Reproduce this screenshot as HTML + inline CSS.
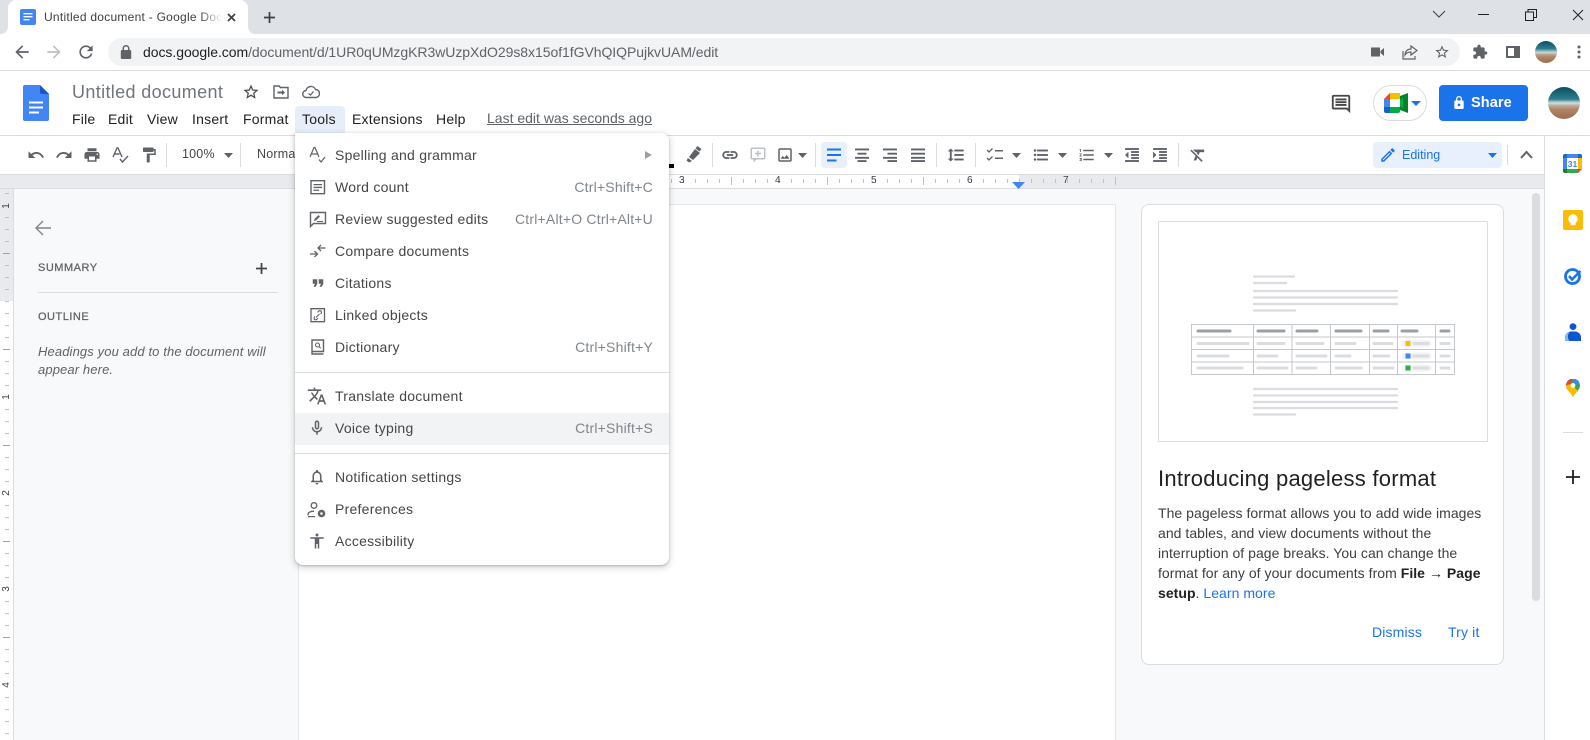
<!DOCTYPE html>
<html><head><meta charset="utf-8"><style>
html,body{margin:0;padding:0;width:1590px;height:740px;overflow:hidden;background:#f8f9fa;font-family:"Liberation Sans",Arial,sans-serif;color:#3c4043}
div,svg,span.a{position:absolute}
.t{white-space:nowrap;line-height:20px;height:20px}
svg.i{width:18px;height:18px;fill:#5f6368}
.b{stroke:#5f6368;stroke-width:.5}
.mb{font-size:14px;letter-spacing:.22px;color:#202124;top:109px}
.m{left:335px;font-size:14px;letter-spacing:.25px;color:#444746}
.s{font-size:14px;letter-spacing:.2px;color:#80868b}
.sep{top:143px;width:1px;height:24px;background:#dadce0}
.rn{font-size:10px;color:#3c4043;top:174px;line-height:14px}
.lr{font-size:10px;left:3px;width:8px;text-align:center;line-height:10px;transform:rotate(-90deg);color:#3c4043}
</style></head><body>

<!-- tab strip -->
<div style="left:0;top:0;width:1590px;height:34px;background:#dee1e6"></div>
<div style="left:8px;top:0;width:240px;height:34px;background:#fff;border-radius:8px 8px 0 0"></div>
<svg style="left:0;top:26px;width:8px;height:8px"><path d="M0 8H8V0C8 5 5 8 0 8z" fill="#fff"/></svg>
<svg style="left:248px;top:26px;width:8px;height:8px"><path d="M8 8H0V0C0 5 3 8 8 8z" fill="#fff"/></svg>
<svg style="left:20px;top:9px;width:16px;height:16px"><rect width="16" height="16" rx="2" fill="#4285f4"/><path d="M3.5 4h9v1.4h-9zM3.5 7h9v1.4h-9zM3.5 10h6v1.4h-6z" fill="#fff"/></svg>
<div class="t" style="left:44px;top:7px;width:178px;overflow:hidden;font-size:12px;letter-spacing:.26px;color:#3c4043">Untitled document - Google Docs</div>
<div style="left:200px;top:7px;width:22px;height:20px;background:linear-gradient(90deg,rgba(255,255,255,0),#fff)"></div>
<svg style="left:227px;top:13px;width:9px;height:9px"><path d="M1 1l7 7M8 1l-7 7" stroke="#3c4043" stroke-width="1.7"/></svg>
<svg style="left:264px;top:12px;width:11px;height:11px"><path d="M5.500 0v11M0 5.500h11" stroke="#3c4043" stroke-width="1.700"/></svg>
<svg style="left:1432px;top:10px;width:14px;height:9px"><path d="M1 1l6 6 6-6" fill="none" stroke="#3c4043" stroke-width="1"/></svg>
<div style="left:1478px;top:14px;width:11px;height:1px;background:#202124"></div>
<svg style="left:1525px;top:9px;width:12px;height:12px"><path d="M.5 3h8v8.5h-8zM3 3V.5h8.500v8H8.500" fill="none" stroke="#202124"/></svg>
<svg style="left:1572px;top:9px;width:12px;height:12px"><path d="M1 1l10 10M11 1L1 11" stroke="#202124"/></svg>

<!-- chrome toolbar -->
<div style="left:0;top:34px;width:1590px;height:36px;background:#fff;border-bottom:1px solid #dadce0"></div>
<svg class="i" style="left:12px;top:42px;width:20px;height:20px"><g transform="scale(.833)"><path d="M20 11H7.830l5.590-5.590L12 4l-8 8 8 8 1.410-1.410L7.830 13H20v-2z"/></g></svg>
<svg class="i" style="left:44px;top:42px;width:20px;height:20px;fill:#bdc1c6"><g transform="translate(20 0) scale(-.833 .833)"><path d="M20 11H7.830l5.590-5.590L12 4l-8 8 8 8 1.410-1.410L7.830 13H20v-2z"/></g></svg>
<svg class="i" style="left:76px;top:42px;width:20px;height:20px"><g transform="scale(.833)"><path d="M17.650 6.350C16.200 4.900 14.210 4 12 4c-4.420 0-7.990 3.580-7.990 8s3.570 8 7.990 8c3.730 0 6.840-2.550 7.730-6h-2.080c-.82 2.330-3.040 4-5.650 4-3.310 0-6-2.690-6-6s2.690-6 6-6c1.660 0 3.140.69 4.220 1.780L13 11h7V4l-2.350 2.350z"/></g></svg>
<div style="left:108px;top:38px;width:1352px;height:28px;background:#f1f3f4;border-radius:14px"></div>
<svg style="left:120px;top:45px;width:12px;height:14px"><path d="M10 5H9.500V3.500a3.500 3.500 0 0 0-7 0V5H2a1.200 1.200 0 0 0-1.200 1.200v6.500A1.200 1.200 0 0 0 2 14h8a1.200 1.200 0 0 0 1.200-1.300V6.200A1.200 1.200 0 0 0 10 5zM4 3.500a2 2 0 0 1 4 0V5H4z" fill="#5f6368"/></svg>
<div class="t" style="left:143px;top:42px;font-size:14px;letter-spacing:-.05px;color:#5f6368"><span style="color:#202124">docs.google.com</span>/document/d/1UR0qUMzgKR3wUzpXdO29s8x15of1fGVhQIQPujkvUAM/edit</div>
<svg style="left:1371px;top:46px;width:13px;height:12px"><path d="M0 1.500h9v9H0zM9.500 5L13 2v8L9.500 7z" fill="#5f6368"/></svg>
<svg style="left:1402px;top:44px;width:16px;height:16px"><path d="M1 7v8h12v-3M9 2v3C5 5 3 8 3 11c1.500-2.500 3.500-3 6-3v3l6-4.500z" fill="none" stroke="#5f6368" stroke-width="1.200"/></svg>
<svg class="i" style="left:1434px;top:44px;width:16px;height:16px"><g transform="scale(.667)"><path d="M22 9.240l-7.190-.62L12 2 9.190 8.630 2 9.240l5.460 4.730L5.820 21 12 17.270 18.180 21l-1.630-7.030L22 9.240zM12 15.400l-3.760 2.270 1-4.280-3.320-2.880 4.380-.38L12 6.100l1.710 4.040 4.380.38-3.320 2.880 1 4.280L12 15.400z"/></g></svg>
<svg class="i" style="left:1472px;top:44px;width:16px;height:16px"><g transform="scale(.667)"><path d="M20.500 11H19V7c0-1.100-.9-2-2-2h-4V3.500C13 2.120 11.880 1 10.500 1S8 2.120 8 3.500V5H4c-1.100 0-1.990.9-1.990 2v3.800H3.500c1.490 0 2.700 1.210 2.700 2.700s-1.210 2.700-2.700 2.700H2V20c0 1.100.9 2 2 2h3.800v-1.500c0-1.490 1.210-2.700 2.700-2.700 1.490 0 2.700 1.210 2.700 2.700V22H17c1.100 0 2-.9 2-2v-4h1.500c1.380 0 2.500-1.120 2.500-2.500S21.880 11 20.500 11z"/></g></svg>
<svg style="left:1506px;top:46px;width:14px;height:12px"><path d="M0 0h14v12H0zM2 2v8h6V2z" fill="#5f6368" fill-rule="evenodd"/><rect x="9" y="0" width="5" height="12" fill="#5f6368"/></svg>
<svg style="left:1535px;top:41px;width:22px;height:22px"><defs><linearGradient id="av" x1="0" y1="0" x2="0" y2="1"><stop offset="0" stop-color="#0f4d5e"/><stop offset=".35" stop-color="#2a7f8c"/><stop offset=".52" stop-color="#cfd8d8"/><stop offset=".62" stop-color="#b8a592"/><stop offset=".72" stop-color="#b18566"/><stop offset="1" stop-color="#9d6d50"/></linearGradient></defs><circle cx="11" cy="11" r="11" fill="url(#av)"/></svg>
<svg style="left:1577px;top:45px;width:4px;height:14px"><circle cx="2" cy="2" r="1.500" fill="#5f6368"/><circle cx="2" cy="7" r="1.500" fill="#5f6368"/><circle cx="2" cy="12" r="1.500" fill="#5f6368"/></svg>

<!-- docs header -->
<div style="left:0;top:71px;width:1590px;height:64px;background:#fff;border-bottom:1px solid #dadce0"></div>
<svg style="left:23px;top:85px;width:26px;height:36px"><path d="M2 0H17l9 9v25a2 2 0 0 1-2 2H2a2 2 0 0 1-2-2V2a2 2 0 0 1 2-2z" fill="#4285f4"/><path d="M17 0l9 9h-7a2 2 0 0 1-2-2z" fill="#1a56c4"/><path d="M6 16.500h14v2H6zM6 21.500h14v2H6zM6 26.500h10v2H6z" fill="#fff"/></svg>
<div class="t" style="left:72px;top:82px;font-size:18px;letter-spacing:.36px;color:#70757a">Untitled document</div>
<svg class="i" style="left:242px;top:83px"><g transform="scale(.75)"><path d="M22 9.240l-7.190-.62L12 2 9.190 8.630 2 9.240l5.460 4.730L5.820 21 12 17.270 18.180 21l-1.630-7.030L22 9.240zM12 15.400l-3.760 2.270 1-4.280-3.320-2.880 4.380-.38L12 6.100l1.710 4.040 4.380.38-3.320 2.880 1 4.280L12 15.400z" fill="#444746"/></g></svg>
<svg style="left:273px;top:85px;width:16px;height:14px"><path d="M1 1h5l1.500 1.500H15v10.500H1z" fill="none" stroke="#5f6368" stroke-width="1.400"/><path d="M4.500 6.500H9V4.800l3 2.700-3 2.700V8.500H4.500z" fill="#5f6368"/></svg>
<svg style="left:302px;top:85px;width:18px;height:14px"><path d="M4.500 12.500a3.500 3.500 0 0 1-.5-7A5 5 0 0 1 13.500 4.500 3.800 3.800 0 0 1 13.500 12.500z" fill="none" stroke="#5f6368" stroke-width="1.400"/><path d="M6.500 8.500l2 1.500L11.500 6.500" fill="none" stroke="#5f6368" stroke-width="1.300"/></svg>

<div style="left:295px;top:106px;width:50px;height:27px;background:#e8eef9;border-radius:4px 4px 0 0"></div>
<div class="t mb" style="left:72px">File</div>
<div class="t mb" style="left:108px">Edit</div>
<div class="t mb" style="left:147px">View</div>
<div class="t mb" style="left:192px">Insert</div>
<div class="t mb" style="left:243px">Format</div>
<div class="t mb" style="left:302px">Tools</div>
<div class="t mb" style="left:352px">Extensions</div>
<div class="t mb" style="left:436px">Help</div>
<div class="t" style="left:487px;top:108px;font-size:14px;letter-spacing:0;color:#5f6368;text-decoration:underline">Last edit was seconds ago</div>

<svg class="i" style="left:1330px;top:93px;width:22px;height:22px;fill:#444746"><g transform="scale(.917)"><path d="M21.990 4c0-1.100-.89-2-1.990-2H4c-1.100 0-2 .9-2 2v12c0 1.100.9 2 2 2h14l4 4-.01-18zM20 4v13.170L18.830 16H4V4h16zM6 12h12v2H6zm0-3h12v2H6zm0-3h12v2H6z"/></g></svg>
<div style="left:1373px;top:85px;width:52px;height:34px;border:1px solid #dadce0;border-radius:18px;background:#fff"></div>
<svg style="left:1384px;top:93px;width:24px;height:20px"><path d="M6 0h10v6H6z" fill="#fbbc04"/><path d="M6 0v6H0z" fill="#ea4335"/><path d="M0 6h6v8H0z" fill="#4285f4"/><path d="M0 14h6v6H2a2 2 0 0 1-2-2z" fill="#1a5fc4"/><path d="M6 14h10v4a2 2 0 0 1-2 2H6z" fill="#00ac47"/><path d="M16 3v14l8 3V0z" fill="#00832d"/><path d="M16 7l3-3v12l-3-3z" fill="#00ac47"/><rect x="6" y="6" width="10" height="8" fill="#fff"/></svg>
<svg style="left:1411px;top:101px;width:10px;height:5px"><path d="M0 0h10L5 5z" fill="#1a73e8"/></svg>
<div style="left:1439px;top:85px;width:89px;height:36px;background:#1a73e8;border-radius:4px"></div>
<svg style="left:1454px;top:96px;width:10px;height:13px"><path d="M8.500 4.500H8V3a3 3 0 0 0-6 0v1.500h-.5A1.200 1.200 0 0 0 .3 5.700v6A1.200 1.200 0 0 0 1.500 13h7a1.200 1.200 0 0 0 1.200-1.300v-6a1.200 1.200 0 0 0-1.200-1.200zM3.300 3a1.700 1.700 0 0 1 3.400 0v1.500H3.300zM5 10.200a1.300 1.300 0 1 1 0-2.600 1.300 1.300 0 0 1 0 2.600z" fill="#fff"/></svg>
<div class="t" style="left:1471px;top:93px;font-size:14.5px;font-weight:bold;color:#fff;letter-spacing:.1px">Share</div>
<svg style="left:1548px;top:87px;width:32px;height:32px"><defs><linearGradient id="av2" x1="0" y1="0" x2="0" y2="1"><stop offset="0" stop-color="#0f4d5e"/><stop offset=".38" stop-color="#2a7f8c"/><stop offset=".5" stop-color="#d5dcdc"/><stop offset=".6" stop-color="#b8a592"/><stop offset=".7" stop-color="#b18566"/><stop offset="1" stop-color="#9d6d50"/></linearGradient></defs><circle cx="16" cy="16" r="16" fill="url(#av2)"/></svg>

<!-- docs toolbar -->
<div style="left:0;top:136px;width:1544px;height:38px;background:#fff;border-bottom:1px solid #dadce0"></div>
<svg class="i" style="left:27px;top:146px"><g transform="scale(.75)"><path d="M12.500 8c-2.650 0-5.050.99-6.900 2.600L2 7v9h9l-3.620-3.620c1.390-1.160 3.160-1.880 5.120-1.880 3.540 0 6.550 2.310 7.600 5.500l2.370-.78C21.080 11.030 17.150 8 12.500 8z"/></g></svg>
<svg class="i" style="left:55px;top:146px"><g transform="scale(.75)"><path d="M18.400 10.600C16.550 8.990 14.150 8 11.500 8c-4.650 0-8.580 3.030-9.960 7.220L3.900 16c1.050-3.190 4.050-5.500 7.600-5.500 1.950 0 3.730.72 5.120 1.880L13 16h9V7l-3.600 3.600z"/></g></svg>
<svg class="i" style="left:83px;top:146px"><g transform="scale(.75)"><path d="M19 8H5c-1.660 0-3 1.340-3 3v6h4v4h12v-4h4v-6c0-1.660-1.340-3-3-3zm-3 11H8v-5h8v5zm3-7c-.55 0-1-.45-1-1s.45-1 1-1 1 .45 1 1-.45 1-1 1zm-1-9H6v4h12V3z"/></g></svg>
<svg class="i" style="left:112px;top:146px"><path d="M1 11l4-9h1l4 9M2.500 8h5M8 13l2.500 3 5.500-6" fill="none" stroke="#5f6368" stroke-width="1.400"/></svg>
<svg class="i" style="left:140px;top:146px"><g transform="scale(.75)"><path d="M18 4V3c0-.55-.45-1-1-1H5c-.55 0-1 .45-1 1v4c0 .55.45 1 1 1h12c.55 0 1-.45 1-1V6h1v4H9v11c0 .55.45 1 1 1h2c.55 0 1-.45 1-1v-9h8V4h-3z"/></g></svg>
<div class="sep" style="left:166px"></div>
<div class="t" style="left:182px;top:144px;font-size:12.500px;letter-spacing:.2px;color:#444746">100%</div>
<svg style="left:224px;top:153px;width:10px;height:5px"><path d="M0 0h9L4.500 5z" fill="#5f6368"/></svg>
<div class="sep" style="left:240px"></div>
<div class="t" style="left:257px;top:144px;font-size:12.500px;letter-spacing:.2px;color:#444746">Normal text</div>

<svg style="left:669px;top:164px;width:5px;height:4px"><rect width="5" height="4" fill="#000"/></svg>
<svg class="i" style="left:684px;top:145px"><path d="M5 12l6-8 5 4-7 7zM11.500 3.500l2-2.500 4 3-2 2.500zM4 13l4 3-3 1.500-2.500-2z" fill="#5f6368"/></svg>
<div class="sep" style="left:712px"></div>
<svg class="i" style="left:721px;top:146px"><g transform="scale(.75)" class="b"><path d="M3.900 12c0-1.710 1.390-3.100 3.100-3.100h4V7H7c-2.760 0-5 2.240-5 5s2.240 5 5 5h4v-1.900H7c-1.710 0-3.100-1.390-3.100-3.100zM8 13h8v-2H8v2zm9-6h-4v1.900h4c1.710 0 3.100 1.390 3.100 3.100s-1.390 3.100-3.100 3.100h-4V17h4c2.760 0 5-2.240 5-5s-2.240-5-5-5z"/></g></svg>
<svg class="i" style="left:749px;top:146px;fill:#bdc1c6"><g transform="scale(.75)"><path d="M21.990 4c0-1.100-.89-2-1.990-2H4c-1.100 0-2 .9-2 2v12c0 1.100.9 2 2 2h2v4l4-4h10c1.100 0 2-.9 2-2zM20 16H4V4h16zM11 6h2v3h3v2h-3v3h-2v-3H8V9h3z" fill-rule="evenodd"/></g></svg>
<svg class="i" style="left:776px;top:146px"><g transform="scale(.75)"><path d="M19 5v14H5V5h14m0-2H5c-1.100 0-2 .9-2 2v14c0 1.100.9 2 2 2h14c1.100 0 2-.9 2-2V5c0-1.100-.9-2-2-2zm-4.860 8.860l-3 3.870L9 13.140 6 17h12l-3.860-5.140z"/></g></svg>
<svg style="left:798px;top:153px;width:10px;height:5px"><path d="M0 0h9L4.500 5z" fill="#5f6368"/></svg>
<div class="sep" style="left:815px"></div>
<div style="left:821px;top:142px;width:26px;height:26px;background:#e8f0fe;border-radius:4px"></div>
<svg class="i" style="left:825px;top:146px;fill:#1a73e8"><path d="M2 2.500h14v2H2zM2 8h14v2H2zM2 13.500h9.500v2H2z"/></svg>
<svg class="i" style="left:853px;top:146px"><path d="M2 2.500h14v1.900H2zM4.500 6.700h9v1.900h-9zM2 10.900h14v1.900H2zM4.500 14.100h9V16h-9z"/></svg>
<svg class="i" style="left:881px;top:146px"><path d="M2 2.500h14v1.900H2zM6.500 6.700H16v1.900H6.500zM2 10.900h14v1.900H2zM6.500 14.100H16V16H6.500z"/></svg>
<svg class="i" style="left:909px;top:146px"><path d="M2 2.500h14v1.900H2zM2 6.700h14v1.900H2zM2 10.900h14v1.900H2zM2 14.100h14V16H2z"/></svg>
<div class="sep" style="left:936px"></div>
<svg class="i" style="left:947px;top:146px"><g transform="scale(.75)" class="b"><path d="M6 7h2.500L5 3.500 1.500 7H4v10H1.500L5 20.500 8.500 17H6V7zm4-2v2h12V5H10zm0 14h12v-2H10v2zm0-6h12v-2H10v2z"/></g></svg>
<div class="sep" style="left:975px"></div>
<svg class="i" style="left:986px;top:146px"><path d="M1 4l2 2 3.500-3.500M1 12l2 2 3.500-3.500" fill="none" stroke="#5f6368" stroke-width="1.300"/><path d="M9 4h8v1.500H9zM9 11.500h8V13H9z" fill="#5f6368"/></svg>
<svg style="left:1012px;top:153px;width:10px;height:5px"><path d="M0 0h9L4.500 5z" fill="#5f6368"/></svg>
<svg class="i" style="left:1032px;top:146px"><g transform="scale(.75)" class="b"><path d="M4 10.500c-.83 0-1.500.67-1.500 1.500s.67 1.500 1.500 1.500 1.500-.67 1.500-1.500-.67-1.500-1.500-1.500zm0-6c-.83 0-1.500.67-1.500 1.500S3.170 7.500 4 7.500 5.500 6.830 5.500 6 4.830 4.500 4 4.500zm0 12c-.83 0-1.500.68-1.500 1.500s.68 1.500 1.500 1.500 1.500-.68 1.500-1.500-.67-1.500-1.500-1.500zM7 19h14v-2H7v2zm0-6h14v-2H7v2zm0-8v2h14V5H7z"/></g></svg>
<svg style="left:1058px;top:153px;width:10px;height:5px"><path d="M0 0h9L4.500 5z" fill="#5f6368"/></svg>
<svg class="i" style="left:1078px;top:146px"><g transform="scale(.75)"><path d="M2 17h2v.5H3v1h1v.5H2v1h3v-4H2v1zm1-9h1V4H2v1h1v3zm-1 3h1.800L2 13.100v.9h3v-1H3.200L5 10.900V10H2v1zm5-6v2h14V5H7zm0 14h14v-2H7v2zm0-6h14v-2H7v2z"/></g></svg>
<svg style="left:1104px;top:153px;width:10px;height:5px"><path d="M0 0h9L4.500 5z" fill="#5f6368"/></svg>
<svg class="i" style="left:1123px;top:146px"><g transform="scale(.75)" class="b"><path d="M11 17h10v-2H11v2zm-8-5l4 4V8l-4 4zm0 9h18v-2H3v2zM3 3v2h18V3H3zm8 6h10V7H11v2zm0 4h10v-2H11v2z"/></g></svg>
<svg class="i" style="left:1151px;top:146px"><g transform="scale(.75)" class="b"><path d="M3 21h18v-2H3v2zM3 8v8l4-4-4-4zm8 9h10v-2H11v2zM3 3v2h18V3H3zm8 6h10V7H11v2zm0 4h10v-2H11v2z"/></g></svg>
<div class="sep" style="left:1178px"></div>
<svg class="i" style="left:1189px;top:146px"><g transform="scale(.75)" class="b"><path d="M3.270 5L2 6.270l6.970 6.970L6.500 19h3l1.570-3.660L16.730 21 18 19.730 3.550 5.270 3.270 5zM6 5v.18L8.820 8h2.400l-.72 1.680 2.100 2.100L14.210 8H20V5H6z"/></g></svg>

<div style="left:1373px;top:142px;width:129px;height:26px;background:#e8f0fe;border-radius:4px"></div>
<svg class="i" style="left:1379px;top:146px;fill:#1a73e8"><g transform="scale(.75)"><path d="M14.060 9.020l.92.92L5.920 19H5v-.92l9.060-9.060M17.660 3c-.25 0-.51.100-.7.29l-1.830 1.830 3.750 3.750 1.830-1.830c.39-.39.39-1.020 0-1.410l-2.340-2.340c-.2-.2-.45-.29-.71-.29zm-3.600 3.190L3 17.250V21h3.750L17.810 9.940l-3.750-3.750z"/></g></svg>
<div class="t" style="left:1402px;top:145px;font-size:12.500px;letter-spacing:0;color:#1a73e8">Editing</div>
<svg style="left:1488px;top:153px;width:10px;height:5px"><path d="M0 0h9L4.500 5z" fill="#1a73e8"/></svg>
<div style="left:1507px;top:145px;width:1px;height:20px;background:#dadce0"></div>
<svg style="left:1520px;top:150px;width:13px;height:9px"><path d="M1 8l5.500-6L12 8" fill="none" stroke="#5f6368" stroke-width="2"/></svg>

<!-- ruler -->
<div style="left:0;top:175px;width:1544px;height:13px;background:#e8eaed;border-bottom:1px solid #dadce0"></div>
<div style="left:395px;top:175px;width:624px;height:13px;background:#fff;border-bottom:1px solid #dadce0"></div>
<div style="left:299px;top:179px;width:816px;height:4px;background:repeating-linear-gradient(90deg,#bdc1c6 0 1px,transparent 1px 12px);background-position:0 0"></div>
<div class="rn" style="left:679px">3</div>
<div class="rn" style="left:775px">4</div>
<div class="rn" style="left:871px">5</div>
<div class="rn" style="left:967px">6</div>
<div class="rn" style="left:1063px">7</div>
<div style="left:731px;top:177px;width:1px;height:8px;background:#bdc1c6"></div>
<div style="left:827px;top:177px;width:1px;height:8px;background:#bdc1c6"></div>
<div style="left:923px;top:177px;width:1px;height:8px;background:#bdc1c6"></div>
<div style="left:1115px;top:177px;width:1px;height:8px;background:#bdc1c6"></div>
<svg style="left:1012px;top:182px;width:13px;height:7px"><path d="M0 0h13L6.500 7z" fill="#4285f4"/></svg>

<!-- left ruler -->
<div style="left:0;top:189px;width:13px;height:551px;background:#fff;border-right:1px solid #dadce0"></div>
<div style="left:0;top:189px;width:13px;height:112px;background:#e8eaed;border-right:1px solid #dadce0"></div>
<div style="left:5px;top:193px;width:4px;height:547px;background:repeating-linear-gradient(180deg,#bdc1c6 0 1px,transparent 1px 12px)"></div>
<div style="left:3px;top:253px;width:7px;height:1px;background:#9aa0a6"></div>
<div style="left:3px;top:349px;width:7px;height:1px;background:#9aa0a6"></div>
<div style="left:3px;top:445px;width:7px;height:1px;background:#9aa0a6"></div>
<div style="left:3px;top:541px;width:7px;height:1px;background:#9aa0a6"></div>
<div style="left:3px;top:637px;width:7px;height:1px;background:#9aa0a6"></div>
<div class="lr" style="top:201px;background:#e8eaed">1</div>
<div class="lr" style="top:392px;background:#fff">1</div>
<div class="lr" style="top:488px;background:#fff">2</div>
<div class="lr" style="top:584px;background:#fff">3</div>
<div class="lr" style="top:680px;background:#fff">4</div>

<!-- outline sidebar -->
<svg style="left:34px;top:219px;width:18px;height:18px"><path d="M17 9H2M9 2L2 9l7 7" fill="none" stroke="#80868b" stroke-width="1.400"/></svg>
<div class="t" style="left:38px;top:258px;font-size:11px;letter-spacing:.5px;color:#5f6368;-webkit-text-stroke:.25px #5f6368">SUMMARY</div>
<svg style="left:256px;top:263px;width:11px;height:11px"><path d="M5.500 0v11M0 5.500h11" stroke="#444746" stroke-width="1.800"/></svg>
<div style="left:38px;top:292px;width:240px;height:1px;background:#dadce0"></div>
<div class="t" style="left:38px;top:307px;font-size:11px;letter-spacing:.5px;color:#5f6368;-webkit-text-stroke:.25px #5f6368">OUTLINE</div>
<div class="t" style="left:38px;top:342px;font-size:13px;font-style:italic;letter-spacing:.12px;color:#5f6368">Headings you add to the document will</div>
<div class="t" style="left:38px;top:360px;font-size:13px;font-style:italic;letter-spacing:.12px;color:#5f6368">appear here.</div>

<!-- page -->
<div style="left:299px;top:205px;width:816px;height:535px;background:#fff;box-shadow:0 0 0 1px #e4e6e9"></div>

<!-- promo card -->
<div style="left:1141px;top:204px;width:361px;height:459px;background:#fff;border:1px solid #dadce0;border-radius:8px"></div>
<div style="left:1158px;top:221px;width:328px;height:219px;border:1px solid #dadce0"></div>
<svg style="left:0;top:0;width:1590px;height:740px;pointer-events:none" fill="none" stroke-linecap="round">
<g stroke="#dadce0" stroke-width="2.300">
<path d="M1254 276.500h40M1254 283h32M1254 291h143M1254 297.500h143M1254 304h143M1254 310.500h41"/>
<path d="M1254 389h143M1254 395.500h143M1254 402h143M1254 408h143M1254 414.500h41"/>
</g>
<g stroke="#c4c7cc" stroke-width="1" stroke-linecap="butt">
<path d="M1191.500 324.500h263v50h-263zM1191.500 337h263M1191.500 349.500h263M1191.500 362h263M1253.500 324.500v50M1292 324.500v50M1330.500 324.500v50M1369.500 324.500v50M1397.500 324.500v50M1435.500 324.500v50"/>
</g>
<g stroke="#9aa0a6" stroke-width="3">
<path d="M1198 331h32M1258 331h26M1297 331h20M1336 331h25M1374 331h14M1402 331h15M1441 331h8"/>
</g>
<g stroke="#dadce0" stroke-width="3">
<path d="M1198 343.500h50M1258 343.500h26M1297 343.500h26M1336 343.500h19M1374 343.500h18M1441 343.500h8"/>
<path d="M1198 356h30M1258 356h19M1297 356h29M1336 356h14M1374 356h15M1441 356h8"/>
<path d="M1198 368h44M1258 368h29M1297 368h19M1336 368h25M1374 368h19M1441 368h8"/>
</g>
<g stroke="#f1f3f4" stroke-width="7"><path d="M1405 343.500h23M1405 356h23M1405 368h23"/></g>
<g stroke="#dadce0" stroke-width="3"><path d="M1414 343.500h14M1414 356h14M1414 368h14"/></g>
<rect x="1405.500" y="341" width="5" height="5" fill="#fbbc04"/>
<rect x="1405.500" y="353.500" width="5" height="5" fill="#4285f4"/>
<rect x="1405.500" y="365.500" width="5" height="5" fill="#34a853"/>
</svg>
<div class="t" style="left:1158px;top:466px;height:26px;line-height:26px;font-size:22px;letter-spacing:.25px;color:#202124">Introducing pageless format</div>
<div style="left:1158px;top:503px;width:340px;font-size:14px;line-height:20px;letter-spacing:.04px;color:#3c4043;white-space:nowrap">The pageless format allows you to add wide images<br>and tables, and view documents without the<br>interruption of page breaks. You can change the<br>format for any of your documents from <b style="color:#202124">File → Page<br>setup</b>. <span style="color:#1a73e8">Learn more</span></div>
<div class="t" style="left:1372px;top:622px;font-size:14px;letter-spacing:.15px;color:#1a73e8">Dismiss</div>
<div class="t" style="left:1448px;top:622px;font-size:14px;letter-spacing:.15px;color:#1a73e8">Try it</div>

<!-- scrollbar and side panel -->
<div style="left:1532px;top:193px;width:8px;height:408px;background:#dadce0;border-radius:4px"></div>
<div style="left:1544px;top:136px;width:46px;height:604px;background:#fff;border-left:1px solid #dadce0"></div>
<svg style="left:1563px;top:154px;width:19px;height:19px"><path d="M4 0h11v4H4z" fill="#4285f4"/><path d="M4 0H2a2 2 0 0 0-2 2v2h4z" fill="#1967d2"/><path d="M0 4h4v11H0z" fill="#4285f4"/><path d="M15 4h4v11h-4z" fill="#fbbc04"/><path d="M4 15h11v4H4z" fill="#34a853"/><path d="M0 15h4v4H2a2 2 0 0 1-2-2z" fill="#188038"/><path d="M15 15h4l-4 4z" fill="#ea4335"/><path d="M15 0h2a2 2 0 0 1 2 2v2h-4z" fill="#1967d2"/><rect x="4" y="4" width="11" height="11" fill="#fff"/><text x="9.500" y="13" font-size="8.500" font-weight="bold" font-family="Liberation Sans,sans-serif" text-anchor="middle" fill="#4285f4">31</text></svg>
<svg style="left:1563px;top:210px;width:20px;height:20px"><rect width="20" height="20" rx="2" fill="#fbbc04"/><circle cx="10" cy="9" r="4.700" fill="#fff"/><rect x="7.500" y="12" width="5" height="3.200" fill="#fff"/></svg>
<svg style="left:1564px;top:267px;width:18px;height:18px"><circle cx="8.500" cy="9.500" r="7" fill="none" stroke="#1a73e8" stroke-width="2.800"/><circle cx="8.500" cy="9.500" r="3" fill="#fff"/><path d="M5 9l3 3.500L16.500 4" fill="none" stroke="#1a73e8" stroke-width="2.500"/></svg>
<svg style="left:1565px;top:323px;width:16px;height:18px"><circle cx="8" cy="3.600" r="3.400" fill="#0b57d0"/><path d="M0 18v-3.500A6 6 0 0 1 6 8.500h4a6 6 0 0 1 6 6V18z" fill="#0b57d0"/><path d="M0 18v-3.500A6 6 0 0 1 5 8.600 7 7 0 0 0 4.500 18z" fill="#8ab4f8"/></svg>
<svg style="left:1566px;top:379px;width:14px;height:18px"><path d="M7 18C5 13.500 0 11 0 6.500A7 7 0 0 1 14 6.500C14 11 9 13.500 7 18z" fill="#34a853"/><path d="M2 2L12 12C9.500 14 8 16 7 18 5 13.500 0 11 0 6.500 0 4.800.7 3.200 2 2z" fill="#fbbc04"/><path d="M2 2A7 7 0 0 1 7 0L4.500 4.500z" fill="#ea4335"/><path d="M0 6.500c0-1.700.7-3.300 2-4.500l3 3z" fill="#ea4335"/><path d="M7 0a7 7 0 0 1 6 3.500L9 7z" fill="#4285f4"/><circle cx="7" cy="6.500" r="2.400" fill="#fff"/></svg>
<div style="left:1563px;top:432px;width:20px;height:1px;background:#dadce0"></div>
<svg style="left:1566px;top:470px;width:14px;height:14px"><path d="M7 0v14M0 7h14" stroke="#202124" stroke-width="1.800"/></svg>

<!-- tools menu -->
<div style="left:295px;top:133px;width:374px;height:432px;background:#fff;border-radius:0 8px 8px 8px;box-shadow:0 2px 6px 2px rgba(60,64,67,.15),0 1px 2px rgba(60,64,67,.3)"></div>
<div style="left:295px;top:413px;width:374px;height:32px;background:#f1f3f4"></div>
<div style="left:295px;top:372px;width:374px;height:1px;background:#dadce0"></div>
<div style="left:295px;top:453px;width:374px;height:1px;background:#dadce0"></div>

<div class="t m" style="top:145px">Spelling and grammar</div>
<svg style="left:645px;top:151px;width:7px;height:8px"><path d="M0 0l7 4-7 4z" fill="#9aa0a6"/></svg>
<div class="t m" style="top:177px">Word count</div>
<div class="t m" style="top:209px">Review suggested edits</div>
<div class="t m" style="top:241px">Compare documents</div>
<div class="t m" style="top:273px">Citations</div>
<div class="t m" style="top:305px">Linked objects</div>
<div class="t m" style="top:337px">Dictionary</div>
<div class="t m" style="top:386px">Translate document</div>
<div class="t m" style="top:418px">Voice typing</div>
<div class="t m" style="top:467px">Notification settings</div>
<div class="t m" style="top:499px">Preferences</div>
<div class="t m" style="top:531px">Accessibility</div>

<div class="t s" style="right:937px;top:177px">Ctrl+Shift+C</div>
<div class="t s" style="right:937px;top:209px">Ctrl+Alt+O Ctrl+Alt+U</div>
<div class="t s" style="right:937px;top:337px">Ctrl+Shift+Y</div>
<div class="t s" style="right:937px;top:418px">Ctrl+Shift+S</div>

<svg class="i" style="left:309px;top:146px"><path d="M1 11L5 1.500h1L10 11M2.500 8h6.500M10 13.500l2 2.500 4-5" fill="none" stroke="#5f6368" stroke-width="1.200"/></svg>
<svg class="i" style="left:309px;top:178px"><path d="M2 2.700h13.500v13H2z" fill="none" stroke="#5f6368" stroke-width="1.400"/><path d="M4.500 6h8.500v1.300H4.500zM4.500 8.800h8.500v1.300H4.500zM4.500 11.600h5.500v1.300H4.500z" fill="#5f6368"/></svg>
<svg class="i" style="left:309px;top:210px"><path d="M1.500 2.500h15v11H4.500l-3 3z" fill="none" stroke="#5f6368" stroke-width="1.400"/><path d="M5 11l.5-2 4-4 1.500 1.500-4 4zM8 11h6v1H8z" fill="#5f6368"/></svg>
<svg class="i" style="left:309px;top:242px"><path d="M1 12h7M5.500 9L8.500 12 5.500 15M16.500 6h-7M12 3L9 6l3 3" fill="none" stroke="#5f6368" stroke-width="1.300"/></svg>
<svg class="i" style="left:309px;top:274px"><g transform="scale(.75)"><path d="M6 17h3l2-4V7H5v6h3zm8 0h3l2-4V7h-6v6h3z"/></g></svg>
<svg class="i" style="left:309px;top:306px"><path d="M2 2.700h13.500v13H2z" fill="none" stroke="#5f6368" stroke-width="1.300"/><path d="M6 10.500l-.5.500a1.600 1.600 0 0 0 2.300 2.300l1.200-1.200M11.500 8l.5-.5a1.600 1.600 0 0 0-2.300-2.300L8.500 6.400M7 11.500l3.500-3.500" fill="none" stroke="#5f6368" stroke-width="1.100"/></svg>
<svg class="i" style="left:309px;top:338px"><path d="M3 2h11.500v11.500H3zM3 13.500V16h11.500" fill="none" stroke="#5f6368" stroke-width="1.400"/><circle cx="8.500" cy="7" r="2" fill="none" stroke="#5f6368" stroke-width="1.100"/><path d="M10 8.500l1.700 1.700" stroke="#5f6368" stroke-width="1.100"/></svg>
<svg class="i" style="left:307px;top:386px;width:20px;height:20px"><g transform="scale(.833)"><path d="M12.870 15.070l-2.540-2.510.03-.03c1.740-1.940 2.980-4.170 3.710-6.530H17V4h-7V2H8v2H1v1.990h11.170C11.500 7.920 10.440 9.750 9 11.350 8.070 10.320 7.300 9.190 6.690 8h-2c.73 1.630 1.730 3.170 2.980 4.560l-5.090 5.020L4 19l5-5 3.110 3.110.76-2.040zM18.500 10h-2L12 22h2l1.120-3h4.750L21 22h2l-4.500-12zm-2.620 7l1.620-4.330L19.120 17h-3.240z"/></g></svg>
<svg class="i" style="left:308px;top:419px"><g transform="scale(.75)"><path d="M12 14c1.660 0 3-1.340 3-3V5c0-1.660-1.340-3-3-3S9 3.340 9 5v6c0 1.660 1.340 3 3 3zm-1-9c0-.55.45-1 1-1s1 .45 1 1v6c0 .55-.45 1-1 1s-1-.45-1-1V5zm6 6c0 2.760-2.240 5-5 5s-5-2.240-5-5H5c0 3.530 2.610 6.430 6 6.920V21h2v-3.080c3.390-.49 6-3.390 6-6.920h-2z"/></g></svg>
<svg class="i" style="left:308px;top:468px"><g transform="scale(.75)"><path d="M12 22c1.100 0 2-.9 2-2h-4c0 1.100.9 2 2 2zm6-6v-5c0-3.070-1.630-5.640-4.500-6.320V4c0-.83-.67-1.500-1.500-1.500s-1.500.67-1.500 1.500v.68C7.640 5.360 6 7.920 6 11v5l-2 2v1h16v-1l-2-2zm-2 1H8v-6c0-2.480 1.510-4.500 4-4.500s4 2.020 4 4.500v6z"/></g></svg>
<svg class="i" style="left:307px;top:500px;width:20px;height:20px"><circle cx="7" cy="5.500" r="2.800" fill="none" stroke="#5f6368" stroke-width="1.300"/><path d="M1 15.500v-1c0-2 2.500-3.300 6-3.300" fill="none" stroke="#5f6368" stroke-width="1.300"/><path d="M1 16h7v1.200H1z" fill="#5f6368"/><circle cx="14.500" cy="13.500" r="3.800" fill="#5f6368"/><circle cx="14.500" cy="13.500" r="1.300" fill="#fff"/></svg>
<svg class="i" style="left:308px;top:532px"><g transform="scale(.75)"><path d="M12 2c1.100 0 2 .9 2 2s-.9 2-2 2-2-.9-2-2 .9-2 2-2zm9 7h-6v13h-2v-6h-2v6H9V9H3V7h18v2z"/></g></svg>

</body></html>
